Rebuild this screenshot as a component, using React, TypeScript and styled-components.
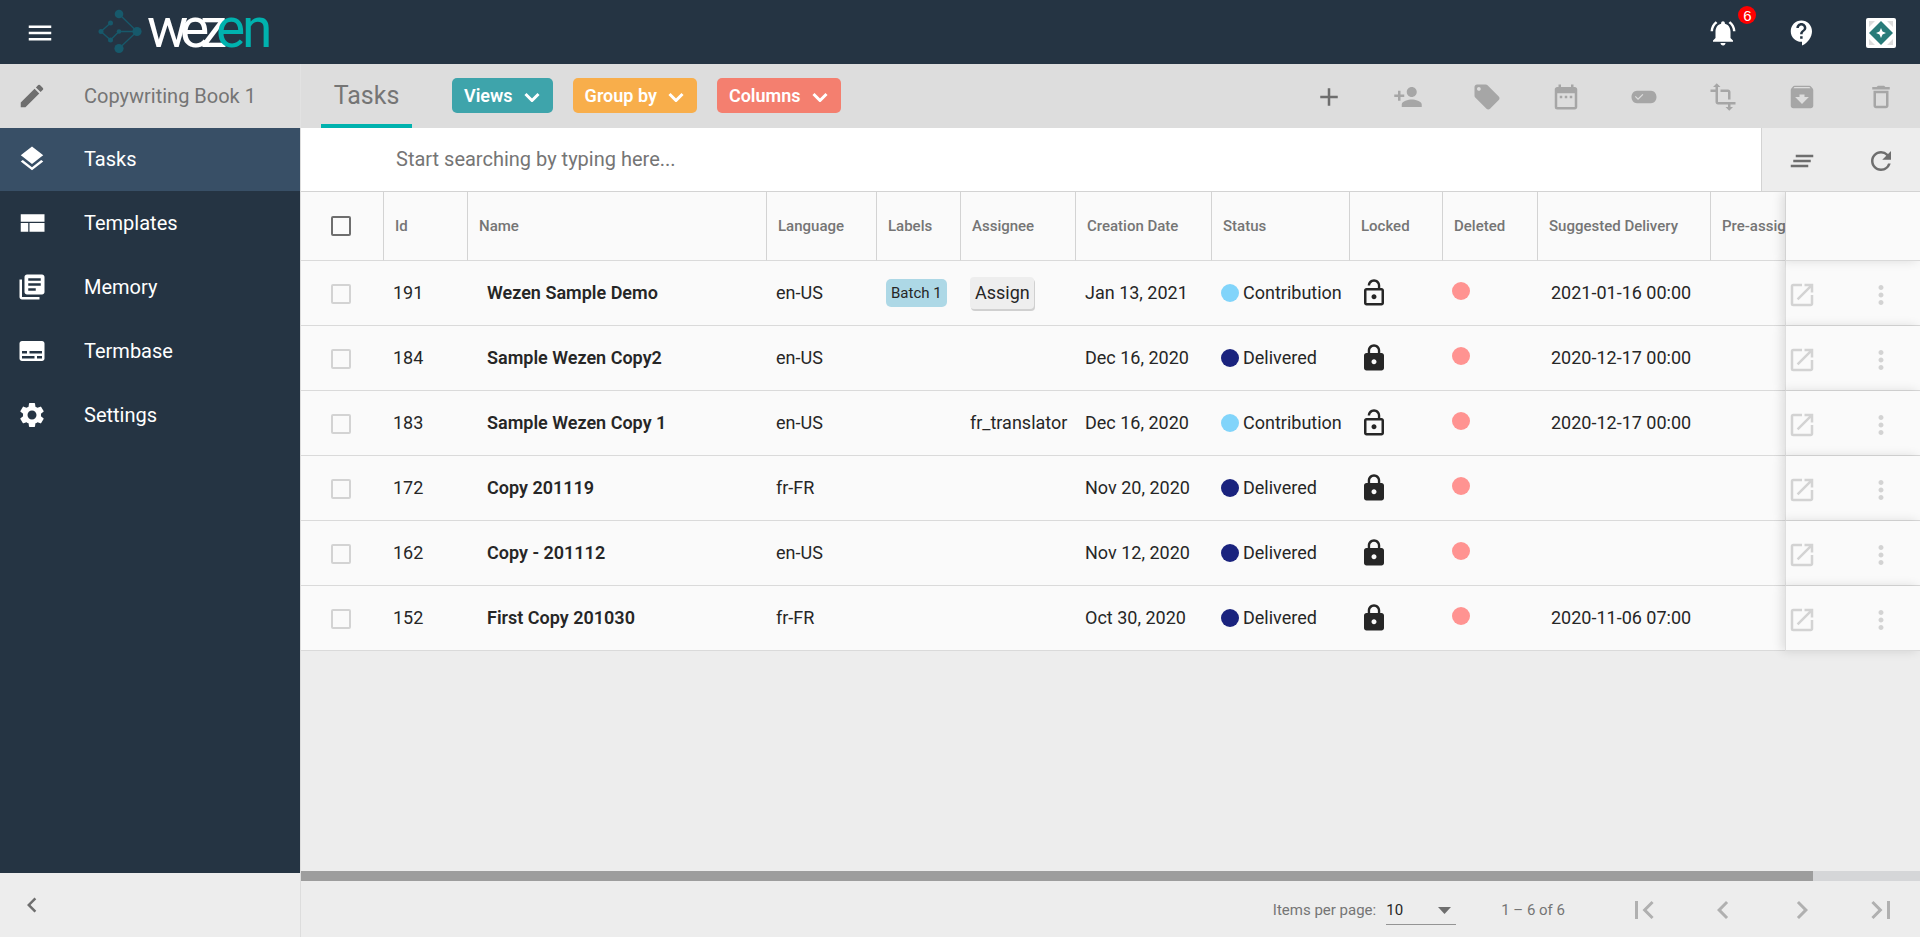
import React from "react";
import styled, { createGlobalStyle, css } from "styled-components";
import {
  MdAdd,
  MdArchive,
  MdChevronLeft,
  MdChevronRight,
  MdClearAll,
  MdContactSupport,
  MdDateRange,
  MdDeleteOutline,
  MdEdit,
  MdEditAttributes,
  MdFirstPage,
  MdLastPage,
  MdLayers,
  MdLibraryBooks,
  MdLocalOffer,
  MdLock,
  MdLockOpen,
  MdMenu,
  MdMoreVert,
  MdNotificationsActive,
  MdOpenInNew,
  MdPersonAdd,
  MdRefresh,
  MdSettings,
  MdSubtitles,
  MdTransform,
} from "react-icons/md";

const color = {
  navy: "#253443",
  navyActive: "#384f66",
  teal: "#00b2ae",
  bar: "#dddddd",
  page: "#ededed",
  surface: "#fafafa",
  line: "#d3d3d3",
  text: "#262626",
  muted: "#757575",
  disabled: "#a6a6a6",
};

const GlobalStyle = createGlobalStyle`
  *, *::before, *::after { box-sizing: border-box; }
  body {
    margin: 0;
    font-family: Roboto, "Liberation Sans", sans-serif;
    color: ${color.text};
    background: ${color.page};
  }
  button, input, select { font: inherit; color: inherit; }
`;

const Page = styled.div`
  display: flex;
  flex-direction: column;
  min-height: 100vh;
`;

const IconButton = styled.button<{ $size?: number }>`
  display: inline-flex;
  align-items: center;
  justify-content: center;
  width: 40px;
  height: 40px;
  padding: 0;
  border: 0;
  background: none;
  color: inherit;
  font-size: ${(p) => p.$size ?? 30}px;
  cursor: pointer;
  &:disabled {
    color: ${color.disabled};
    cursor: default;
  }
`;

/* Equal cells that keep the icons of every bar in the same vertical lines. */
const IconGrid = styled.div<{ $count: number; $width: number }>`
  display: grid;
  grid-template-columns: repeat(${(p) => p.$count}, 1fr);
  place-items: center;
  flex: none;
  width: ${(p) => p.$width}px;
`;

/* ---------- top bar ---------- */

const TopBar = styled.header`
  display: flex;
  align-items: center;
  justify-content: space-between;
  height: 64px;
  padding: 2px 0 0 20px;
  background: ${color.navy};
  color: #fff;
`;

const Brand = styled.div`
  display: flex;
  align-items: center;
  gap: 34px;
`;

const LogoLink = styled.a`
  display: block;
  height: 62px;
`;

const Wordmark = styled.text`
  font-family: Roboto, sans-serif;
  font-size: 55px;
  font-weight: 400;
`;

const BellWrap = styled.div`
  position: relative;
  display: flex;
`;

const Badge = styled.span`
  position: absolute;
  top: -7px;
  right: -13px;
  width: 18px;
  height: 18px;
  border-radius: 9px;
  background: #f00;
  font-family: "Liberation Sans", Arial, sans-serif;
  font-size: 15px;
  line-height: 20px;
  text-align: center;
`;

/* ---------- second bar ---------- */

const SubBar = styled.div`
  display: flex;
  height: 64px;
  background: ${color.bar};
  color: #6e6e6e;
`;

const BookTitle = styled.div`
  display: flex;
  align-items: center;
  flex: none;
  gap: 32px;
  width: 301px;
  padding: 0 0 0 12px;
  border-right: 1px solid #e2e2e2;
  font-size: 20px;
  line-height: 24px;
`;

const BookName = styled.span`
  color: ${color.muted};
`;

const Tab = styled.a`
  align-self: stretch;
  margin-left: 20px;
  padding: 17px 12px 0;
  width: 91px;
  border-bottom: 4px solid ${color.teal};
  color: ${color.muted};
  font-size: 25px;
  line-height: 30px;
  text-align: center;
  text-decoration: none;
`;

const Filters = styled.div`
  display: flex;
  gap: 20px;
  flex: 1;
  padding: 14px 0 0 40px;
`;

const FilterButton = styled.button<{ $bg: string }>`
  display: inline-flex;
  align-items: center;
  gap: 11px;
  height: 35px;
  padding: 0 13px 0 12px;
  border: 0;
  border-radius: 5px;
  background: ${(p) => p.$bg};
  color: #fff;
  font-size: 18px;
  font-weight: 600;
  line-height: 20px;
  cursor: pointer;
`;

const ToolGrid = styled(IconGrid)`
  padding-top: 2px;
`;

/* ---------- side navigation ---------- */

const Body = styled.div`
  display: flex;
  flex: 1;
`;

const Sidebar = styled.aside`
  display: flex;
  flex-direction: column;
  flex: none;
  width: 300px;
  background: ${color.navy};
`;

const NavList = styled.nav`
  display: flex;
  flex-direction: column;
  gap: 1px;
  flex: 1;
`;

const NavItem = styled.a<{ $active?: boolean }>`
  display: flex;
  align-items: center;
  gap: 37px;
  height: 63px;
  padding: 0 0 2px 17px;
  background: ${(p) => (p.$active ? color.navyActive : "transparent")};
  color: #fff;
  font-size: 20px;
  line-height: 24px;
  text-decoration: none;
`;

const CollapseBar = styled.div`
  display: flex;
  align-items: center;
  height: 64px;
  padding-left: 12px;
  background: ${color.page};
  color: #6e6e6e;
`;

/* ---------- main panel ---------- */

const Main = styled.main`
  display: flex;
  flex-direction: column;
  flex: 1;
  min-width: 0;
  border-left: 1px solid ${color.bar};
  background: ${color.page};
`;

const SearchBar = styled.div`
  display: flex;
  height: 64px;
  border-bottom: 1px solid ${color.line};
  background: #fff;
`;

const SearchInput = styled.input`
  flex: 1;
  min-width: 0;
  padding: 0 24px 2px 95px;
  border: 0;
  outline: 0;
  background: none;
  font-size: 20px;
  line-height: 24px;
  &::placeholder {
    color: ${color.muted};
    opacity: 1;
  }
`;

const SearchActions = styled(IconGrid)`
  padding-top: 2px;
  border-left: 1px solid ${color.line};
  background: ${color.page};
  color: #6e6e6e;
`;

const TableScroll = styled.div`
  flex: 1;
  overflow-x: auto;
  overflow-y: hidden;
  scrollbar-width: none;
`;

const Table = styled.table`
  width: calc(100% + 107px);
  table-layout: fixed;
  border-collapse: separate;
  border-spacing: 0;
`;

const Col = styled.col<{ $w?: number }>`
  width: ${(p) => (p.$w ? `${p.$w}px` : "auto")};
`;

const pinned = css`
  position: sticky;
  right: 0;
  padding: 0;
  border-left: 1px solid ${color.line};
  box-shadow: -3px 0 10px rgba(0, 0, 0, 0.12);
`;

const HeadCell = styled.th`
  height: 69px;
  padding: 0 0 0 11px;
  border-left: 1px solid ${color.line};
  border-bottom: 1px solid #dadada;
  background: ${color.surface};
  color: ${color.muted};
  font-size: 15px;
  font-weight: 500;
  line-height: 20px;
  text-align: left;
  white-space: nowrap;
  &:first-child {
    padding-left: 30px;
    border-left: 0;
  }
`;

const PinnedHead = styled(HeadCell)`
  ${pinned}
  z-index: 1;
`;

const Cell = styled.td<{ $indent?: number }>`
  height: 65px;
  padding: 0 0 0 ${(p) => p.$indent ?? 10}px;
  border-bottom: 1px solid #dadada;
  background: ${color.surface};
  font-size: 18px;
  line-height: 22px;
  white-space: nowrap;
`;

const TickCell = styled(Cell)`
  padding-top: 2px;
`;

const NameCell = styled(Cell)`
  font-weight: 600;
`;

const PinnedCell = styled(Cell)`
  ${pinned}
  border-left-color: #dedede;
  color: ${color.line};
`;

const Tick = styled.input<{ $strong?: boolean }>`
  display: block;
  appearance: none;
  width: 20px;
  height: 20px;
  margin: 0;
  border: 2px solid ${(p) => (p.$strong ? "#6e6e6e" : color.line)};
  border-radius: 2px;
  &:checked {
    background: ${color.teal};
  }
`;

const Chip = styled.span`
  display: inline-block;
  padding: 0 5px;
  border-radius: 5px;
  background: #add8e6;
  font-size: 15px;
  line-height: 28px;
`;

const AssignButton = styled.button`
  height: 32px;
  padding: 0 4px 0 5px;
  border: 0;
  border-radius: 4px;
  background: #eeeeee;
  box-shadow: 1px 2px 0 #d0d0d0;
  cursor: pointer;
`;

const Status = styled.span`
  display: flex;
  align-items: center;
  gap: 4px;
`;

const Dot = styled.span<{ $fill: string }>`
  flex: none;
  display: block;
  width: 18px;
  height: 18px;
  border-radius: 50%;
  background: ${(p) => p.$fill};
`;

const LockIcon = styled.span`
  display: flex;
  font-size: 30px;
`;

const DeletedCell = styled(Cell)`
  padding-bottom: 4px;
`;

const PinnedActions = styled.div`
  display: flex;
  justify-content: space-between;
  padding: 3px 19px 0 0;
  margin-left: -4px;
`;

/* ---------- scroll track and paginator ---------- */

const Track = styled.div`
  height: 10px;
  background: #d5d6d8;
`;

const Thumb = styled.div`
  width: 93.4%;
  height: 100%;
  background: #9d9d9d;
`;

const Paginator = styled.footer`
  display: flex;
  align-items: center;
  justify-content: flex-end;
  height: 56px;
  padding-top: 2px;
  color: ${color.muted};
  font-size: 15px;
  line-height: 20px;
`;

const SizeLabel = styled.label`
  display: flex;
  align-items: center;
  gap: 10px;
`;

const SelectWrap = styled.span`
  position: relative;
  display: flex;
`;

const PageSize = styled.select`
  appearance: none;
  width: 70px;
  height: 30px;
  padding: 0;
  border: 0;
  border-bottom: 1px solid #949494;
  border-radius: 0;
  background: none;
  color: ${color.text};
`;

const SelectArrow = styled.svg`
  position: absolute;
  right: 5px;
  top: 12px;
  pointer-events: none;
`;

const Range = styled.span`
  padding: 0 40px 0 45px;
`;

const PageButtons = styled(IconGrid)`
  color: #b0b0b0;
`;

/* ---------- drawings ---------- */

const Logo = () => (
  <svg width="180" height="62" viewBox="94 2 180 62" overflow="visible" role="img" aria-label="wezen">
    <g stroke="#17596b" strokeWidth="1.3" fill="none">
      <path d="M119 14L137 31.500L119 48.500M119 31.500H137M110.500 23L101 31.500L110.500 40L119 31.500" />
    </g>
    <g fill="#17596b">
      <circle cx="119" cy="14" r="4.300" />
      <circle cx="137" cy="31.500" r="4.600" />
      <circle cx="119" cy="48.500" r="4.600" />
      <circle cx="110.500" cy="23" r="2.500" />
      <circle cx="101" cy="31.500" r="2.500" />
      <circle cx="110.500" cy="40" r="2.500" />
      <circle cx="119" cy="31.500" r="2.300" />
    </g>
    <Wordmark y="47">
      <tspan x="147 180 200" fill="#fff">
        wez
      </tspan>
      <tspan x="216 242" fill={color.teal}>
        en
      </tspan>
    </Wordmark>
  </svg>
);

const Avatar = () => (
  <svg width="30" height="30" viewBox="0 0 30 30" aria-hidden="true">
    <rect width="30" height="30" rx="2" fill="#fff" />
    <path d="M3 3h6L3 9zM27 3h-6l6 6zM3 27h6l-6-6zM27 27h-6l6-6z" fill="#dcdcdc" />
    <path d="M15 3L27 15L15 27L3 15z" fill="#287b79" />
    <path d="M15 10l1.500 3.500L20 15l-3.500 1.500L15 20l-1.500-3.500L10 15l3.500-1.500z" fill="#fff" />
  </svg>
);

const TemplatesIcon = () => (
  <svg width="1em" height="1em" viewBox="0 0 24 24" fill="currentColor" aria-hidden="true">
    <path d="M3 19h6v-7H3v7zm7 0h12v-7H10v7zM3 5v6h19V5H3z" />
  </svg>
);

const Chevron = () => (
  <svg width="16" height="12" viewBox="0 0 16 12" fill="none" aria-hidden="true">
    <path d="M1.500 4L8 10.500L14.500 4" stroke="#fff" strokeWidth="3" />
  </svg>
);

/* ---------- data ---------- */

type Task = {
  id: number;
  name: string;
  language: string;
  label?: string;
  assignee?: string;
  canAssign?: boolean;
  created: string;
  status: "Contribution" | "Delivered";
  delivery?: string;
};

const tasks: Task[] = [
  { id: 191, name: "Wezen Sample Demo", language: "en-US", label: "Batch 1", canAssign: true, created: "Jan 13, 2021", status: "Contribution", delivery: "2021-01-16 00:00" },
  { id: 184, name: "Sample Wezen Copy2", language: "en-US", created: "Dec 16, 2020", status: "Delivered", delivery: "2020-12-17 00:00" },
  { id: 183, name: "Sample Wezen Copy 1", language: "en-US", assignee: "fr_translator", created: "Dec 16, 2020", status: "Contribution", delivery: "2020-12-17 00:00" },
  { id: 172, name: "Copy 201119", language: "fr-FR", created: "Nov 20, 2020", status: "Delivered" },
  { id: 162, name: "Copy - 201112", language: "en-US", created: "Nov 12, 2020", status: "Delivered" },
  { id: 152, name: "First Copy 201030", language: "fr-FR", created: "Oct 30, 2020", status: "Delivered", delivery: "2020-11-06 07:00" },
];

const columns: { title: string; width?: number }[] = [
  { title: "Id", width: 84 },
  { title: "Name" },
  { title: "Language", width: 110 },
  { title: "Labels", width: 84 },
  { title: "Assignee", width: 115 },
  { title: "Creation Date", width: 136 },
  { title: "Status", width: 138 },
  { title: "Locked", width: 93 },
  { title: "Deleted", width: 95 },
  { title: "Suggested Delivery", width: 173 },
  { title: "Pre-assigned", width: 182 },
];

const NavIcon = styled.span`
  display: flex;
  font-size: 30px;
`;

const navItems = [
  { label: "Tasks", icon: <MdLayers /> },
  { label: "Templates", icon: <TemplatesIcon /> },
  { label: "Memory", icon: <MdLibraryBooks /> },
  { label: "Termbase", icon: <MdSubtitles /> },
  { label: "Settings", icon: <MdSettings /> },
];

const tools = [
  { label: "Add task", icon: <MdAdd />, enabled: true },
  { label: "Assign user", icon: <MdPersonAdd /> },
  { label: "Set labels", icon: <MdLocalOffer /> },
  { label: "Set dates", icon: <MdDateRange /> },
  { label: "Set status", icon: <MdEditAttributes /> },
  { label: "Transform", icon: <MdTransform /> },
  { label: "Archive", icon: <MdArchive /> },
  { label: "Delete", icon: <MdDeleteOutline /> },
];

const statusColor = { Contribution: "#81d4fa", Delivered: "#1a237e" };

const TaskRow = ({ task }: { task: Task }) => (
  <tr>
    <TickCell $indent={30}>
      <Tick type="checkbox" aria-label={`Select task ${task.id}`} />
    </TickCell>
    <Cell>{task.id}</Cell>
    <NameCell $indent={20}>{task.name}</NameCell>
    <Cell>{task.language}</Cell>
    <Cell>{task.label && <Chip>{task.label}</Chip>}</Cell>
    <Cell>{task.canAssign ? <AssignButton type="button">Assign</AssignButton> : task.assignee}</Cell>
    <Cell>{task.created}</Cell>
    <Cell>
      <Status>
        <Dot $fill={statusColor[task.status]} />
        {task.status}
      </Status>
    </Cell>
    <Cell>
      <LockIcon>{task.status === "Delivered" ? <MdLock /> : <MdLockOpen />}</LockIcon>
    </Cell>
    <DeletedCell>
      <Dot $fill="#ff9391" />
    </DeletedCell>
    <Cell $indent={14}>{task.delivery}</Cell>
    <Cell />
    <PinnedCell>
      <PinnedActions>
        <IconButton type="button" aria-label={`Open task ${task.id}`}>
          <MdOpenInNew />
        </IconButton>
        <IconButton type="button" aria-label={`More actions for task ${task.id}`}>
          <MdMoreVert />
        </IconButton>
      </PinnedActions>
    </PinnedCell>
  </tr>
);

export default function App() {
  return (
    <Page>
      <GlobalStyle />
      <TopBar>
        <Brand>
          <IconButton type="button" aria-label="Menu">
            <MdMenu />
          </IconButton>
          <LogoLink href="#home">
            <Logo />
          </LogoLink>
        </Brand>
        <IconGrid $count={3} $width={236}>
          <BellWrap>
            <IconButton type="button" aria-label="Notifications">
              <MdNotificationsActive />
            </IconButton>
            <Badge>6</Badge>
          </BellWrap>
          <IconButton type="button" aria-label="Help">
            <MdContactSupport />
          </IconButton>
          <IconButton type="button" aria-label="Account">
            <Avatar />
          </IconButton>
        </IconGrid>
      </TopBar>

      <SubBar>
        <BookTitle>
          <IconButton type="button" aria-label="Edit book">
            <MdEdit />
          </IconButton>
          <BookName>Copywriting Book 1</BookName>
        </BookTitle>
        <Tab href="#tasks">Tasks</Tab>
        <Filters>
          <FilterButton type="button" $bg="#3ea4ab">
            Views <Chevron />
          </FilterButton>
          <FilterButton type="button" $bg="#f8ae4b">
            Group by <Chevron />
          </FilterButton>
          <FilterButton type="button" $bg="#f47f6f">
            Columns <Chevron />
          </FilterButton>
        </Filters>
        <ToolGrid $count={8} $width={630}>
          {tools.map((t) => (
            <IconButton key={t.label} type="button" aria-label={t.label} disabled={!t.enabled}>
              {t.icon}
            </IconButton>
          ))}
        </ToolGrid>
      </SubBar>

      <Body>
        <Sidebar>
          <NavList>
            {navItems.map((item, i) => (
              <NavItem key={item.label} href={`#${item.label.toLowerCase()}`} $active={i === 0}>
                <NavIcon>{item.icon}</NavIcon>
                {item.label}
              </NavItem>
            ))}
          </NavList>
          <CollapseBar>
            <IconButton type="button" aria-label="Collapse sidebar">
              <MdChevronLeft />
            </IconButton>
          </CollapseBar>
        </Sidebar>

        <Main>
          <SearchBar>
            <SearchInput type="text" aria-label="Search tasks" placeholder="Start searching by typing here..." />
            <SearchActions $count={2} $width={159}>
              <IconButton type="button" aria-label="Clear filters">
                <MdClearAll />
              </IconButton>
              <IconButton type="button" aria-label="Refresh">
                <MdRefresh />
              </IconButton>
            </SearchActions>
          </SearchBar>

          <TableScroll>
            <Table>
              <colgroup>
                <Col $w={82} />
                {columns.map((c) => (
                  <Col key={c.title} $w={c.width} />
                ))}
                <Col $w={135} />
              </colgroup>
              <thead>
                <tr>
                  <HeadCell>
                    <Tick type="checkbox" $strong aria-label="Select all tasks" />
                  </HeadCell>
                  {columns.map((c) => (
                    <HeadCell key={c.title} scope="col">
                      {c.title}
                    </HeadCell>
                  ))}
                  <PinnedHead aria-label="Actions" />
                </tr>
              </thead>
              <tbody>
                {tasks.map((t) => (
                  <TaskRow key={t.id} task={t} />
                ))}
              </tbody>
            </Table>
          </TableScroll>

          <Track>
            <Thumb />
          </Track>
          <Paginator>
            <SizeLabel>
              Items per page:
              <SelectWrap>
                <PageSize defaultValue="10">
                  <option>10</option>
                  <option>25</option>
                  <option>50</option>
                </PageSize>
                <SelectArrow width="13" height="7" viewBox="0 0 13 7" aria-hidden="true">
                  <path d="M0 0h13L6.500 7z" fill="#6e6e6e" />
                </SelectArrow>
              </SelectWrap>
            </SizeLabel>
            <Range>1 – 6 of 6</Range>
            <PageButtons $count={4} $width={315}>
              <IconButton type="button" $size={36} aria-label="First page">
                <MdFirstPage />
              </IconButton>
              <IconButton type="button" $size={36} aria-label="Previous page">
                <MdChevronLeft />
              </IconButton>
              <IconButton type="button" $size={36} aria-label="Next page">
                <MdChevronRight />
              </IconButton>
              <IconButton type="button" $size={36} aria-label="Last page">
                <MdLastPage />
              </IconButton>
            </PageButtons>
          </Paginator>
        </Main>
      </Body>
    </Page>
  );
}
